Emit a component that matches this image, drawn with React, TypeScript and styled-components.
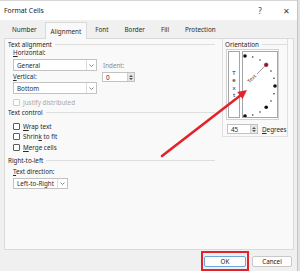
import styled, { createGlobalStyle } from 'styled-components';

const GlobalStyle = createGlobalStyle`
  *, *::before, *::after { box-sizing: border-box; }
  html, body { margin: 0; padding: 0; background: #e2e2e2; }
  body { font-family: 'Noto Sans', 'Liberation Sans', sans-serif; }
`;

const Window = styled.div`
  position: relative;
  width: 298px;
  height: 271px;
  display: flex;
  flex-direction: column;
  background: #f0f0f0;
  border-right: 1px solid #c4c4c4;
  font-size: 6.3px;
  color: #2b2b2b;
  overflow: hidden;
`;

const TitleBar = styled.div`
  height: 20px;
  flex: none;
  display: flex;
  align-items: center;
  padding-left: 4px;
  background: #ffffff;
  border-top: 1px solid #d6d6d6;
`;

const Title = styled.span`
  flex: 1;
  font-size: 6.8px;
  color: #1a1a1a;
`;

const TitleControls = styled.div`
  display: flex;
  gap: 4px;
  height: 100%;
`;

const TitleButton = styled.span`
  width: 22px;
  display: flex;
  align-items: center;
  justify-content: center;
  font-size: 8px;
  color: #3a3a3a;
`;

const TabStrip = styled.div`
  height: 18px;
  flex: none;
  display: flex;
  align-items: stretch;
  padding-left: 4px;
`;

const Tab = styled.div<{ $active?: boolean }>`
  display: flex;
  align-items: center;
  padding: 0 ${p => (p.$active ? 5 : 7)}px;
  margin-top: ${p => (p.$active ? 2 : 0)}px;
  margin-bottom: ${p => (p.$active ? -1 : 0)}px;
  background: ${p => (p.$active ? '#f9f9f9' : 'transparent')};
  border: 1px solid ${p => (p.$active ? '#dadada' : 'transparent')};
  border-bottom: none;
  position: relative;
  z-index: 1;
`;

const Panel = styled.div`
  flex: 1;
  display: flex;
  margin: 0 3px 0 4px;
  padding-left: 3px;
  background: #f9f9f9;
  border: 1px solid #dadada;
`;

const LeftColumn = styled.div`
  width: 207px;
  display: flex;
  flex-direction: column;
`;

const GroupHeader = styled.div<{ $height?: number; $gapTop?: number }>`
  display: flex;
  align-items: center;
  gap: 3px;
  height: ${p => p.$height ?? 11}px;
  margin-top: ${p => p.$gapTop ?? 0}px;
  color: #1f1f1f;

  &::after {
    content: '';
    flex: 1;
    height: 1px;
    background: #dedede;
  }
`;

const Indented = styled.div`
  padding-left: 5px;
  display: flex;
  flex-direction: column;
`;

const FieldLabel = styled.div<{ $height: number; $gapBottom?: number }>`
  height: ${p => p.$height}px;
  margin-bottom: ${p => p.$gapBottom ?? 0}px;
  display: flex;
  align-items: center;
`;

const FieldGrid = styled.div`
  display: grid;
  grid-template-columns: 84px 33px;
  grid-template-rows: 12px 11px 12px;
  column-gap: 5px;
`;

const Select = styled.div<{ $width: number; $height?: number }>`
  width: ${p => p.$width}px;
  height: ${p => p.$height ?? 12}px;
  display: flex;
  background: #ffffff;
  border: 1px solid #c2c2c2;
`;

const SelectValue = styled.span`
  flex: 1;
  display: flex;
  align-items: center;
  padding-left: 3px;
`;

const SelectArrow = styled.span`
  width: 10px;
  display: flex;
  align-items: center;
  justify-content: center;
  border-left: 1px solid #dcdcdc;
`;

const Muted = styled.span`
  color: #8c8c8c;
  display: flex;
  align-items: center;
  padding-left: 1px;
`;

const SpinField = styled.div<{ $width: number }>`
  width: ${p => p.$width}px;
  height: 10px;
  display: flex;
  background: #ffffff;
  border: 1px solid #c2c2c2;
  align-self: end;
`;

const SpinValue = styled.span`
  flex: 1;
  display: flex;
  align-items: center;
  padding-left: 3px;
`;

const SpinButtons = styled.span`
  width: 7px;
  display: flex;
  flex-direction: column;
  align-items: center;
  justify-content: center;
  gap: 1px;
  background: #e6e6e6;
  border-left: 1px solid #cfcfcf;
`;

const CheckRow = styled.div<{ $disabled?: boolean; $height?: number; $gapTop?: number }>`
  display: flex;
  align-items: center;
  gap: 3px;
  height: ${p => p.$height ?? 10.5}px;
  margin-top: ${p => p.$gapTop ?? 0}px;
  color: ${p => (p.$disabled ? '#a8a8a8' : 'inherit')};
`;

const CheckBox = styled.span<{ $disabled?: boolean }>`
  width: 7px;
  height: 7px;
  border: 1px solid ${p => (p.$disabled ? '#cdcdcd' : '#5c5c5c')};
  border-radius: 1px;
  background: #ffffff;
`;

const Key = styled.span`
  text-decoration: underline;
  text-underline-offset: 1px;
`;

const OrientGroup = styled.div`
  width: 66px;
  height: 98px;
  margin-left: 7px;
  display: flex;
  flex-direction: column;
  padding-left: 1px;
  border: 1px solid #e0e0e0;
  border-top: none;
`;

const OrientHeader = styled(GroupHeader)`
  padding-left: 1px;
`;

const DialFrame = styled.div`
  width: 53px;
  height: 71px;
  margin-left: 2px;
  display: flex;
  gap: 2px;
  padding: 1px 0 1px 1px;
  background: #ffffff;
  border: 1px solid #d2d2d2;
`;

const VerticalText = styled.div`
  width: 12px;
  display: flex;
  flex-direction: column;
  align-items: center;
  justify-content: center;
  border: 1px solid #a6a6a6;
  font-size: 6px;
  line-height: 7.5px;
  color: #222;
`;

const DialBox = styled.div`
  width: 36px;
  border: 1px solid #a6a6a6;
  display: flex;
`;

const DegreesRow = styled.div`
  display: flex;
  align-items: center;
  gap: 4px;
  margin: 4px 0 0 3px;
  height: 10px;
`;

const Footer = styled.div`
  height: 21px;
  flex: none;
  display: flex;
  justify-content: flex-end;
  align-items: flex-start;
  gap: 3px;
  padding: 1px 5px 0 0;
`;

const Highlight = styled.div`
  border: 2px solid #e3232b;
  padding: 3px 1px 2px;
`;

const Button = styled.div<{ $default?: boolean; $width: number }>`
  width: ${p => p.$width}px;
  height: 11px;
  margin-top: ${p => (p.$default ? 0 : 5)}px;
  display: flex;
  align-items: center;
  justify-content: center;
  background: #fdfdfd;
  border: 1px solid ${p => (p.$default ? '#6ea6dc' : '#c9c9c9')};
  border-radius: 2px;
  color: #1a1a1a;
`;

const Annotation = styled.svg`
  position: absolute;
  left: 0;
  top: 0;
  pointer-events: none;
  z-index: 5;
`;

const Chevron = () => (
  <svg width="5" height="3" viewBox="0 0 5 3">
    <path d="M0.5 0.5 L2.5 2.5 L4.5 0.5" stroke="#6a6a6a" strokeWidth="0.8" fill="none" />
  </svg>
);

const Spinner = () => (
  <SpinButtons>
    <svg width="4" height="2" viewBox="0 0 4 2"><path d="M0 2 L2 0 L4 2Z" fill="#555" /></svg>
    <svg width="4" height="2" viewBox="0 0 4 2"><path d="M0 0 L4 0 L2 2Z" fill="#555" /></svg>
  </SpinButtons>
);

const Dial = () => {
  const cx = 2;
  const cy = 34;
  const r = 30;
  const dots = [];
  for (let a = 90; a >= -90; a -= 15) {
    const rad = (a * Math.PI) / 180;
    const big = a % 45 === 0;
    const x = cx + r * Math.cos(rad);
    const y = cy - r * Math.sin(rad);
    if (a === 45) {
      dots.push(<circle key={a} cx={x} cy={y} r={1.9} fill="#a3142c" stroke="#5a0a14" strokeWidth="0.4" />);
    } else {
      dots.push(<circle key={a} cx={x} cy={y} r={big ? 1.8 : 0.7} fill="#111" />);
    }
  }
  const k = Math.SQRT1_2;
  return (
    <svg width="34" height="65" viewBox="0 0 34 65">
      {dots}
      <line x1={cx + 17 * k} y1={cy - 17 * k} x2={cx + 28 * k} y2={cy - 28 * k} stroke="#333" strokeWidth="0.5" />
      <text
        x={cx + 10 * k}
        y={cy - 10 * k}
        fontSize="5"
        fill="#333"
        textAnchor="middle"
        dominantBaseline="middle"
        transform={`rotate(-45 ${cx + 10 * k} ${cy - 10 * k})`}
        fontFamily="'Noto Sans', sans-serif"
      >
        Text
      </text>
    </svg>
  );
};

export default function App() {
  return (
    <>
      <GlobalStyle />
      <Window>
        <TitleBar>
          <Title>Format Cells</Title>
          <TitleControls>
            <TitleButton>?</TitleButton>
            <TitleButton>✕</TitleButton>
          </TitleControls>
        </TitleBar>

        <TabStrip>
          <Tab>Number</Tab>
          <Tab $active>Alignment</Tab>
          <Tab>Font</Tab>
          <Tab>Border</Tab>
          <Tab>Fill</Tab>
          <Tab>Protection</Tab>
        </TabStrip>

        <Panel>
          <LeftColumn>
            <GroupHeader $height={10}>Text alignment</GroupHeader>
            <Indented>
              <FieldLabel $height={7} $gapBottom={3}>
                <span><Key>H</Key>orizontal:</span>
              </FieldLabel>
              <FieldGrid>
                <Select $width={84}>
                  <SelectValue>General</SelectValue>
                  <SelectArrow><Chevron /></SelectArrow>
                </Select>
                <Muted>Indent:</Muted>
                <FieldLabel $height={11}>
                  <span><Key>V</Key>ertical:</span>
                </FieldLabel>
                <SpinField $width={33}>
                  <SpinValue>0</SpinValue>
                  <Spinner />
                </SpinField>
                <Select $width={84}>
                  <SelectValue>Bottom</SelectValue>
                  <SelectArrow><Chevron /></SelectArrow>
                </Select>
              </FieldGrid>
              <CheckRow $disabled $height={10} $gapTop={3}>
                <CheckBox $disabled />
                Justify distributed
              </CheckRow>
            </Indented>

            <GroupHeader>Text control</GroupHeader>
            <Indented>
              <CheckRow $gapTop={3}>
                <CheckBox />
                <span><Key>W</Key>rap text</span>
              </CheckRow>
              <CheckRow>
                <CheckBox />
                <span>Shrin<Key>k</Key> to fit</span>
              </CheckRow>
              <CheckRow>
                <CheckBox />
                <span><Key>M</Key>erge cells</span>
              </CheckRow>
            </Indented>

            <GroupHeader $gapTop={2}>Right-to-left</GroupHeader>
            <Indented>
              <FieldLabel $height={11} $gapBottom={1.5}>
                <span><Key>T</Key>ext direction:</span>
              </FieldLabel>
              <Select $width={55} $height={11}>
                <SelectValue>Left-to-Right</SelectValue>
                <SelectArrow><Chevron /></SelectArrow>
              </Select>
            </Indented>
          </LeftColumn>

          <OrientGroup>
            <OrientHeader $height={10}>Orientation</OrientHeader>
            <DialFrame>
              <VerticalText>
                <span>T</span>
                <span>e</span>
                <span>x</span>
                <span>t</span>
              </VerticalText>
              <DialBox>
                <Dial />
              </DialBox>
            </DialFrame>
            <DegreesRow>
              <SpinField $width={31}>
                <SpinValue>45</SpinValue>
                <Spinner />
              </SpinField>
              <span><Key>D</Key>egrees</span>
            </DegreesRow>
          </OrientGroup>
        </Panel>

        <Footer>
          <Highlight>
            <Button $default $width={42}>OK</Button>
          </Highlight>
          <Button $width={40}>Cancel</Button>
        </Footer>

        <Annotation width="298" height="271" viewBox="0 0 298 271">
          <line x1="162" y1="156" x2="241" y2="95" stroke="#e3232b" strokeWidth="2.6" strokeLinecap="round" />
          <path d="M247 90 L242.6 99 L237.2 92 Z" fill="#e3232b" />
        </Annotation>
      </Window>
    </>
  );
}
